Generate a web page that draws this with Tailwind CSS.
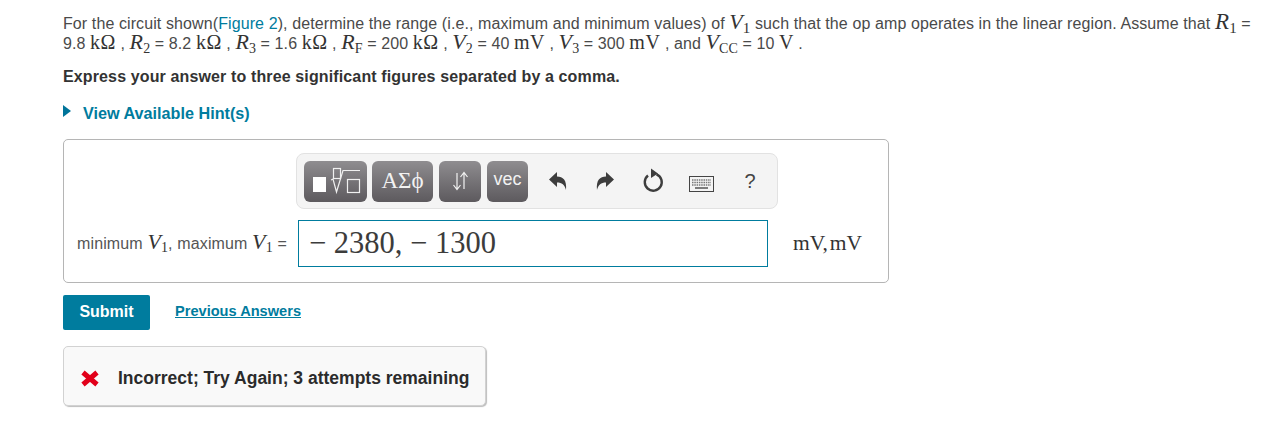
<!DOCTYPE html>
<html lang="en">
<head>
    <meta charset="UTF-8">
    <meta name="viewport" content="width=device-width, initial-scale=1.0">
    <title>Op Amp Question</title>
    <script src="https://cdn.jsdelivr.net/npm/@tailwindcss/browser@4"></script>
</head>
<body class="bg-white min-h-screen font-['Liberation_Sans',Arial,sans-serif] text-[#4a4a4a] text-[16px]">
    <div class="w-[1273px] pl-[63px] pt-[14px]">
        <!-- Question text -->
        <p class="w-[1200px] leading-[20px] whitespace-nowrap tracking-[0.1px]">For the circuit shown(<a href="#" class="text-[#007c9e]">Figure 2</a>), determine the range (i.e., maximum and minimum values) of <span class="font-['Liberation_Serif',serif] text-[22px] leading-[0] text-[#333]"><i>V</i><sub class="text-[15px] leading-none">1</sub></span> such that the op amp operates in the linear region. Assume that <span class="font-['Liberation_Serif',serif] text-[23px] leading-[0] text-[#333]"><i>R</i><sub class="text-[15px] leading-none">1</sub></span> =<br>9.8 <span class="font-['Liberation_Serif',serif] text-[20px] leading-[0] text-[#333] tracking-[0.5px]">kΩ</span> , <span class="font-['Liberation_Serif',serif] text-[22px] leading-[0] text-[#333]"><i>R</i><sub class="text-[14px] leading-none">2</sub></span> = 8.2 <span class="font-['Liberation_Serif',serif] text-[20px] leading-[0] text-[#333] tracking-[0.5px]">kΩ</span> , <span class="font-['Liberation_Serif',serif] text-[22px] leading-[0] text-[#333]"><i>R</i><sub class="text-[14px] leading-none">3</sub></span> = 1.6 <span class="font-['Liberation_Serif',serif] text-[20px] leading-[0] text-[#333] tracking-[0.5px]">kΩ</span> , <span class="font-['Liberation_Serif',serif] text-[22px] leading-[0] text-[#333]"><i>R</i><sub class="text-[14px] leading-none">F</sub></span> = 200 <span class="font-['Liberation_Serif',serif] text-[20px] leading-[0] text-[#333] tracking-[0.5px]">kΩ</span> , <span class="font-['Liberation_Serif',serif] text-[22px] leading-[0] text-[#333]"><i>V</i><sub class="text-[14px] leading-none">2</sub></span> = 40 <span class="font-['Liberation_Serif',serif] text-[20px] leading-[0] text-[#333] tracking-[0.5px]">mV</span> , <span class="font-['Liberation_Serif',serif] text-[22px] leading-[0] text-[#333]"><i>V</i><sub class="text-[14px] leading-none">3</sub></span> = 300 <span class="font-['Liberation_Serif',serif] text-[20px] leading-[0] text-[#333] tracking-[0.5px]">mV</span> , and <span class="font-['Liberation_Serif',serif] text-[22px] leading-[0] text-[#333]"><i>V</i><sub class="text-[14px] leading-none">CC</sub></span> = 10 <span class="font-['Liberation_Serif',serif] text-[20px] leading-[0] text-[#333]">V</span> .</p>

        <p class="mt-[13px] font-bold text-[16px] leading-[20px] text-[#333] tracking-[0.13px]">Express your answer to three significant figures separated by a comma.</p>

        <!-- Hints -->
        <div class="mt-[16px] flex items-center h-[20px]">
            <svg class="w-[8px] h-[12px] mb-[4px]" viewBox="0 0 8 12"><path d="M0 0L8 6L0 12Z" fill="#00749a"/></svg>
            <a href="#" class="ml-[12px] font-bold text-[16.200px] text-[#007c9e]">View Available Hint(s)</a>
        </div>

        <!-- Answer panel -->
        <div class="mt-[16px] w-[826px] h-[144px] border border-[#b5b5b5] rounded-[5px]">
            <div class="ml-[232px] mt-[13px] w-[482px] h-[56px] bg-[#f4f4f4] border border-[#e2e2e2] rounded-[8px] flex items-center pl-[7px]">
                <button class="w-[63px] h-[41px] rounded-[6px] bg-gradient-to-b from-[#8f8d90] to-[#5d5a5e]">
                    <svg class="w-[63px] h-[41px]" viewBox="0 0 63 41" fill="none">
                        <rect x="9" y="16" width="13" height="15" fill="#fff"/>
                        <rect x="29.500" y="7.500" width="7" height="10" stroke="#f0f0f0" stroke-width="1.200"/>
                        <path d="M27 19L29 18L32.500 31L39 9.500H56" stroke="#f0f0f0" stroke-width="1.200"/>
                        <rect x="43.500" y="18.500" width="12" height="13" stroke="#f0f0f0" stroke-width="1.200"/>
                    </svg>
                </button>
                <button class="ml-[5px] w-[61px] h-[41px] rounded-[6px] bg-gradient-to-b from-[#8f8d90] to-[#5d5a5e] text-[#f2f2f2] font-['Liberation_Serif',serif] text-[23px]">ΑΣϕ</button>
                <button class="ml-[6px] w-[42px] h-[41px] rounded-[6px] bg-gradient-to-b from-[#8f8d90] to-[#5d5a5e] flex items-center justify-center">
                    <svg class="w-[18px] h-[20px]" viewBox="0 0 18 20" fill="none" stroke="#f2f2f2" stroke-width="1.200">
                        <path d="M6 2V18M2.500 14L6 18.500L9.500 14"/>
                        <path d="M13 18V2M9.500 6L13 1.500L16.500 6"/>
                    </svg>
                </button>
                <button class="ml-[6px] w-[41px] h-[41px] rounded-[6px] bg-gradient-to-b from-[#8f8d90] to-[#5d5a5e] text-[#f2f2f2] text-[18px] pb-[3px]">vec</button>
                <svg class="ml-[21px] w-[18px] h-[20px]" viewBox="0 0 18 20"><path d="M0 8.500L8 1V5.500C14 5.500 18 9 17 19C15.500 13.500 13 11.500 8 11.500V16Z" fill="#3d3d3d"/></svg>
                <svg class="ml-[29px] w-[18px] h-[20px]" viewBox="0 0 18 20"><path d="M18 8.500L10 1V5.500C4 5.500 0 9 1 19C2.500 13.500 5 11.500 10 11.500V16Z" fill="#3d3d3d"/></svg>
                <svg class="ml-[28px] w-[22px] h-[26px]" viewBox="0 0 22 26" fill="none"><path d="M14.500 6.300A8.500 8.500 0 1 1 6 7.500" stroke="#3d3d3d" stroke-width="2.400"/><path d="M9 0.500L16 5.500L9 10Z" fill="#3d3d3d"/></svg>
                <svg class="ml-[25px] mt-[6px] w-[25px] h-[16px]" viewBox="0 0 25 16" fill="none"><rect x="0.500" y="0.500" width="24" height="15" stroke="#444"/><path d="M3 4H22M3 6.500H22M3 9H22" stroke="#777" stroke-width="1.500" stroke-dasharray="1.500 0.800"/><path d="M6 12H19" stroke="#555" stroke-width="1.500"/></svg>
                <span class="ml-[30px] w-[12px] text-[20px] text-[#444] text-center">?</span>
            </div>
            <div class="mt-[11px] pl-[13px] flex items-center">
                <span class="w-[221px] whitespace-nowrap text-[#555] tracking-[0.13px]">minimum <span class="font-['Liberation_Serif',serif] text-[22px] leading-[0] text-[#333]"><i>V</i><sub class="text-[14px] leading-none">1</sub></span>, maximum <span class="font-['Liberation_Serif',serif] text-[22px] leading-[0] text-[#333]"><i>V</i><sub class="text-[14px] leading-none">1</sub></span> =</span>
                <div class="w-[470px] h-[47px] border border-[#007c9e] pl-[10px] flex items-center font-['Liberation_Serif',serif] text-[30.500px] text-[#3c3c3c] whitespace-nowrap">− 2380, − 1300</div>
                <span class="ml-[25px] font-['Liberation_Serif',serif] text-[21.500px] text-[#333] whitespace-nowrap">mV,<span class="ml-[2px]">mV</span></span>
            </div>
        </div>

        <!-- Actions -->
        <div class="mt-[12px] flex items-center">
            <button class="w-[87px] h-[35px] pb-[2px] bg-[#007c9e] rounded-[2px] text-white text-[16px] font-bold">Submit</button>
            <a href="#" class="ml-[25px] mb-[2px] font-bold text-[14.600px] text-[#007c9e] underline">Previous Answers</a>
        </div>

        <!-- Feedback -->
        <div class="mt-[16px] w-[423px] h-[60px] pt-[5px] bg-[#f9f9f9] border border-[#d2d2d2] rounded-[5px] shadow-[1px_1px_1px_#bdbdbd] flex items-center pl-[17px]">
            <svg class="w-[18px] h-[17px]" viewBox="0 0 18 17"><path d="M2 2.500L16 14.500M16 2.500L2 14.500" stroke="#e2001a" stroke-width="5"/></svg>
            <span class="ml-[19px] font-bold text-[#2b2b2b] text-[17.500px] whitespace-nowrap">Incorrect; Try Again; 3 attempts remaining</span>
        </div>
    </div>
</body>
</html>
